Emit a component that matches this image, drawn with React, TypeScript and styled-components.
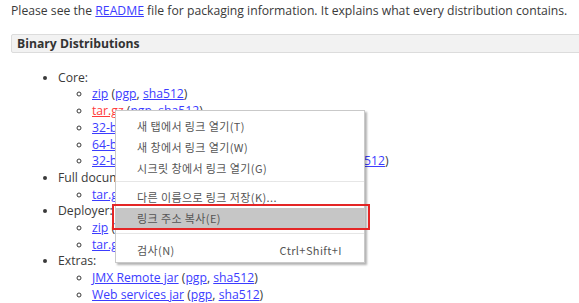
import React from "react";
import styled, { createGlobalStyle } from "styled-components";

type Link = { label: string; active?: boolean };
type Item = { title: string; files: Link[] };

const items: Item[] = [
    {
        title: "Core:",
        files: [
            { label: "zip" },
            { label: "tar.gz", active: true },
            { label: "32-bit Windows zip" },
            { label: "64-bit Windows zip" },
            { label: "32-bit/64-bit Windows Service Installer" },
        ],
    },
    { title: "Full documentation:", files: [{ label: "tar.gz" }] },
    { title: "Deployer:", files: [{ label: "zip" }, { label: "tar.gz" }] },
    { title: "Extras:", files: [{ label: "JMX Remote jar" }, { label: "Web services jar" }] },
];

type MenuEntry = { label: string; shortcut?: string; highlighted?: boolean } | { sep: number };

const menu: MenuEntry[] = [
    { label: "새 탭에서 링크 열기(T)" },
    { label: "새 창에서 링크 열기(W)" },
    { label: "시크릿 창에서 링크 열기(G)" },
    { sep: 5 },
    { label: "다른 이름으로 링크 저장(K)..." },
    { label: "링크 주소 복사(E)", highlighted: true },
    { sep: 8 },
    { label: "검사(N)", shortcut: "Ctrl+Shift+I" },
];

const App: React.FC = () => {
    return <Page>
        <GlobalStyle/>
        <Intro>Please see the <A href="#">README</A> file for packaging information. It explains what every distribution contains.</Intro>
        <SectionTitle>Binary Distributions</SectionTitle>
        <List>
            { items.map(item => <li key={ item.title }>
                { item.title }
                <SubList>
                    { item.files.map((f, i) => <li key={ i }>
                        <A href="#" $active={ f.active }>{ f.label }</A> (<A href="#">pgp</A>, <A href="#">sha512</A>)
                    </li>) }
                </SubList>
            </li>) }
        </List>

        <Menu>
            { menu.map((m, i) => "sep" in m
                ? <Separator key={ i } $gap={ m.sep }/>
                : <MenuItem key={ i } $highlighted={ m.highlighted }>
                    <span>{ m.label }</span>
                    { m.shortcut && <span>{ m.shortcut }</span> }
                </MenuItem>) }
        </Menu>
        <Callout/>
    </Page>
}

export default App;

const GlobalStyle = createGlobalStyle`
  html, body {
    margin: 0;
    padding: 0;
    background: #fff;
    overflow: hidden;
  }
`;

const Page = styled.div`
  position: relative;
  width: 579px;
  height: 303px;
  overflow: hidden;
  padding: 3px 0 0 11px;
  box-sizing: border-box;
  font-family: "Open Sans", "Noto Sans", sans-serif;
  font-size: 12.2px;
  line-height: 16.7px;
  color: #3a3a3a;
`;

const A = styled.a<{ $active?: boolean }>`
  color: ${ p => p.$active ? "#ff3b3b" : "#3c3cff" };
  text-decoration: underline;
`;

const Intro = styled.p`
  margin: 0;
`;

const SectionTitle = styled.h3`
  margin: 14px -20px 0 0;
  height: 19px;
  box-sizing: border-box;
  padding: 0 0 0 5px;
  background: #f2f2f2;
  border: 1px solid #dcdcdc;
  border-radius: 2px;
  font-size: 12.2px;
  font-weight: 700;
  line-height: 17px;
  color: #333;
`;

const List = styled.ul`
  margin: 17px 0 0;
  padding-left: 47px;
  list-style: disc;
`;

const SubList = styled.ul`
  margin: 0;
  padding-left: 34px;
  list-style: circle;
`;

const Menu = styled.div`
  position: absolute;
  left: 115px;
  top: 110px;
  width: 250px;
  padding: 5px 0 1px;
  box-sizing: border-box;
  background: #fff;
  border: 1px solid #c9c9c9;
  box-shadow: 2px 2px 2px rgba(0, 0, 0, 0.3);
  font-family: "Noto Sans CJK KR", "Noto Sans", sans-serif;
  font-size: 11px;
  color: #555;
`;

const MenuItem = styled.div<{ $highlighted?: boolean }>`
  display: flex;
  justify-content: space-between;
  align-items: center;
  height: 21px;
  padding: 0 22px 0 21px;
  background: ${ p => p.$highlighted ? "#c6c6c6" : "transparent" };
  letter-spacing: 0.4px;
`;

const Separator = styled.div<{ $gap: number }>`
  height: 1px;
  margin: ${ p => Math.floor(p.$gap / 2) }px 0 ${ p => Math.ceil(p.$gap / 2) + 2 }px;
  background: #e6e6e6;
`;

const Callout = styled.div`
  position: absolute;
  left: 112px;
  top: 204px;
  width: 258px;
  height: 26px;
  box-sizing: border-box;
  border: 2px solid #e42626;
`;
